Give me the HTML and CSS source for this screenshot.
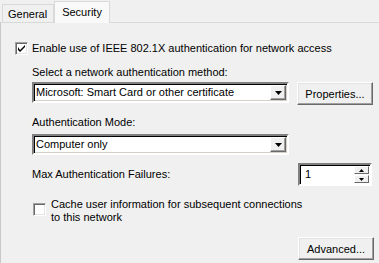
FILE: index.html
```html
<!DOCTYPE html>
<html lang="en">
<head>
  <meta charset="UTF-8" />
  <title>Security</title>
  <link rel="stylesheet" href="styles.css">
</head>
<body>

  <div class="tabs">
    <div class="tab">General</div>
    <div class="tab active">Security</div>
  </div>

  <div class="panel">
    <div class="check-row">
      <span class="box">
        <svg width="7" height="7" viewBox="0 0 7 7"><path d="M0 2 L0 5 L2 7 L7 2 L7 0 L2 5 Z" fill="#000"/></svg>
      </span>
      <span>Enable use of IEEE 802.1X authentication for network access</span>
    </div>

    <div class="content">
      <div class="label first">Select a network authentication method:</div>
      <div class="row">
        <div class="combo">
          <span class="value">Microsoft: Smart Card or other certificate</span>
          <span class="drop"><svg width="7" height="4" viewBox="0 0 7 4"><path d="M0 0 H7 L3.5 4 Z" fill="#000"/></svg></span>
        </div>
        <button class="btn">Properties...</button>
      </div>

      <div class="label second">Authentication Mode:</div>
      <div class="combo">
        <span class="value">Computer only</span>
        <span class="drop"><svg width="7" height="4" viewBox="0 0 7 4"><path d="M0 0 H7 L3.5 4 Z" fill="#000"/></svg></span>
      </div>

      <div class="row spin-row">
        <span>Max Authentication Failures:</span>
        <div class="spin">
          <span class="value">1</span>
          <span class="arrows">
            <span class="arrow"><svg width="5" height="3" viewBox="0 0 5 3"><path d="M0 3 H5 L2.5 0 Z" fill="#000"/></svg></span>
            <span class="arrow"><svg width="5" height="3" viewBox="0 0 5 3"><path d="M0 0 H5 L2.5 3 Z" fill="#000"/></svg></span>
          </span>
        </div>
      </div>

      <div class="check-row cache">
        <span class="box"></span>
        <span>Cache user information for subsequent connections<br>to this network</span>
      </div>

      <div class="actions">
        <button class="btn">Advanced...</button>
      </div>
    </div>
  </div>

</body>
</html>
```

FILE: styles.css
```css
* {
  box-sizing: border-box;
}

body {
  margin: 0;
  height: 100vh;
  background-color: #f0f0f0;
  font-family: 'Liberation Sans', Arial, sans-serif;
  font-size: 11px;
  line-height: 13px;
  color: #000;
  overflow: hidden;
}

.tabs {
  display: flex;
  align-items: flex-end;
  height: 22px;
  padding-left: 2px;
}

.tab {
  height: 18px;
  padding: 1px 6px 0 5px;
  border: 1px solid #d9d9d9;
  border-bottom: none;
  background: #f0f0f0;
  line-height: 16px;
}

.tab.active {
  position: relative;
  height: 22px;
  margin-bottom: -1px;
  padding: 0 7px;
  background: #f9f9f9;
  border-color: #d9d9d9;
  line-height: 21px;
  z-index: 1;
}

.panel {
  height: calc(100vh - 22px);
  border-top: 1px solid #d9d9d9;
  border-left: 1px solid #c9c9c9;
  background: #f0f0f0;
  padding: 19px 0 0 14px;
}

.check-row {
  display: flex;
  align-items: flex-start;
  gap: 4px;
}

.box {
  width: 13px;
  height: 13px;
  border: 1px solid;
  border-color: #a0a0a0 #fff #fff #a0a0a0;
  box-shadow: inset 1px 1px #696969, inset -1px -1px #e3e3e3;
  background: #fff;
  display: flex;
  align-items: center;
  justify-content: center;
  flex-shrink: 0;
}

.content {
  width: 340px;
  margin-left: 17px;
}

.label.first {
  margin-top: 11px;
}

.label.second {
  margin-top: 11px;
}

.row {
  display: flex;
  justify-content: space-between;
  align-items: flex-start;
  margin-top: 3px;
}

.combo {
  width: 257px;
  height: 21px;
  border: 2px solid;
  border-color: #808080 #fff #fff #808080;
  box-shadow: inset 1px 1px #000, inset -1px -1px #d4d0c8;
  background: #fff;
  display: flex;
  align-items: center;
  justify-content: space-between;
  padding-left: 1px;
}

.label.second + .combo {
  margin-top: 5px;
}

.combo .value {
  padding-left: 1px;
}

.drop {
  width: 16px;
  height: 15px;
  margin-right: 1px;
  border: 1px solid;
  border-color: #fff #696969 #696969 #fff;
  box-shadow: inset -1px -1px #a0a0a0;
  background: #f0f0f0;
  display: flex;
  align-items: center;
  justify-content: center;
}

.btn {
  width: 76px;
  height: 23px;
  margin: 0 -1px 0 0;
  padding: 0;
  border: 1px solid;
  border-color: #fff #696969 #696969 #fff;
  box-shadow: inset -1px -1px #a0a0a0, inset 1px 1px #e3e3e3;
  background: #f0f0f0;
  font-family: inherit;
  font-size: 11px;
  color: #000;
}

.spin-row {
  align-items: center;
  margin-top: 8px;
}

.spin {
  width: 74px;
  height: 23px;
  border: 2px solid;
  border-color: #808080 #fff #fff #808080;
  box-shadow: inset 1px 1px #000;
  background: #fff;
  display: flex;
  justify-content: space-between;
  align-items: stretch;
}

.spin .value {
  padding: 3px 0 0 5px;
}

.arrows {
  display: flex;
  flex-direction: column;
  gap: 1px;
  padding: 1px 1px 1px 0;
}

.arrow {
  flex: 1;
  width: 15px;
  border: 1px solid;
  border-color: #fff #696969 #696969 #fff;
  background: #f0f0f0;
  display: flex;
  align-items: center;
  justify-content: center;
}

.cache {
  margin-top: 12px;
  gap: 5px;
}

.cache .box {
  margin: 5px 0 0 1px;
}

.actions {
  display: flex;
  justify-content: flex-end;
  margin-top: 13px;
}

.actions .btn {
  margin-right: -2px;
}
```
